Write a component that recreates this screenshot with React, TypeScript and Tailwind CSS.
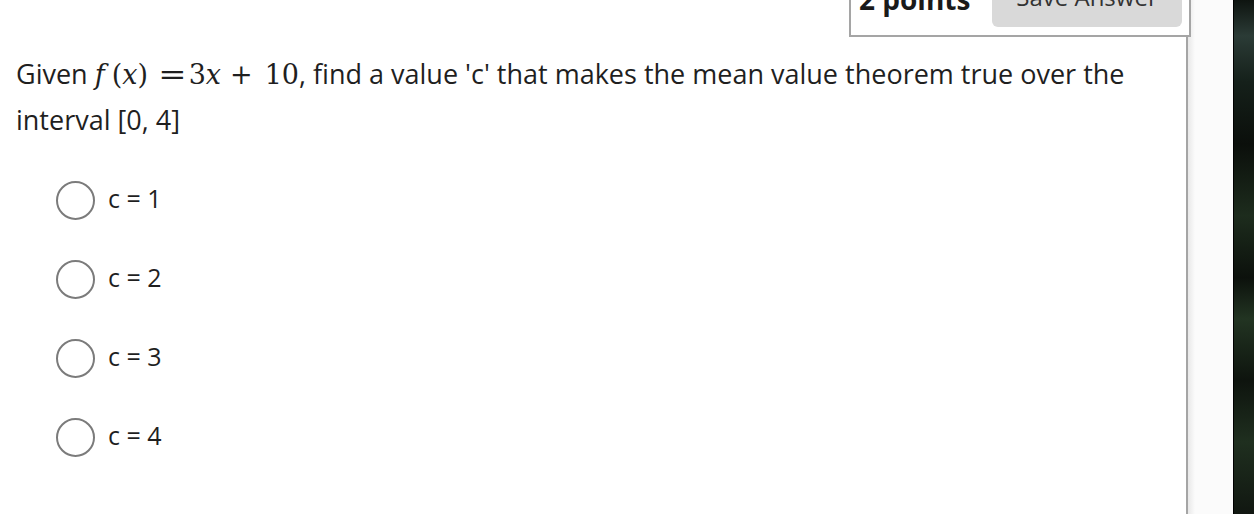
const options = ["c = 1", "c = 2", "c = 3", "c = 4"];

function Radio({ label }: { label: string }) {
  return (
    <label className="flex h-[39px] items-center">
      <span className="ml-[56px] h-[39px] w-[39px] shrink-0 rounded-full border-2 border-[#7b7b7b] bg-white" />
      <span className="mb-[4px] ml-[13px] text-[25px] leading-none text-[#1f1f1f]">{label}</span>
    </label>
  );
}

export default function App() {
  return (
    <div className="flex h-[514px] w-[1254px] overflow-hidden bg-white font-['Open_Sans',sans-serif] text-[#1f1f1f]">
      <div className="flex w-[1188px] shrink-0 flex-col">
        {/* header box, cut off at the top of the screenshot */}
        <div className="flex h-[37px] shrink-0 justify-end">
          <div className="relative z-10 -mr-[3px] flex h-[37px] w-[342px] items-end justify-between overflow-hidden border-2 border-t-0 border-[#a5a5a5] bg-white pb-[8px] pl-[8px] pr-[7px]">
            <span className="mb-[14px] text-[28px] font-bold leading-none text-[#1a1a1a]">2 points</span>
            <button className="flex h-[50px] w-[190px] items-end justify-center rounded-[6px] bg-[#d9d9d9] pb-[18px] text-[24px] leading-none text-[#333]">
              Save Answer
            </button>
          </div>
        </div>

        <div className="flex flex-1 flex-col border-r-2 border-[#a5a5a5]">
          <p className="mt-[14px] pl-[16px] text-[27px] leading-[45px]">
            Given{" "}
            <span className="font-['DejaVu_Serif',serif] text-[27px]">
              <i>f</i>
              <span className="ml-[7px]">(</span>
              <i>x</i>
              <span>)</span>
              <span className="ml-[13px] mr-[5px] inline-block scale-x-125">=</span>
              <span>3</span>
              <i>x</i>
              <span className="ml-[9px] mr-[12px]">+</span>
              <span>10</span>
            </span>
            , find a value 'c' that makes the mean value theorem true over the
            <br />
            interval [0, 4]
          </p>

          <div className="mt-[39px] flex flex-col gap-[40px]">
            {options.map((o) => (
              <Radio key={o} label={o} />
            ))}
          </div>
        </div>
      </div>

      <div className="w-[45px] shrink-0 bg-[linear-gradient(to_right,#e8e8e8,#fbfbfb_7px,#fbfbfb)]" />
      <div className="w-px shrink-0 bg-black" />
      <div className="flex-1 bg-[linear-gradient(180deg,#0e1410_0%,#2b3b36_7%,#15201a_16%,#0b0f0b_28%,#1d2c1d_42%,#0c110c_54%,#223422_62%,#0e140e_74%,#1f2f1f_86%,#111711_100%)]" />
    </div>
  );
}
